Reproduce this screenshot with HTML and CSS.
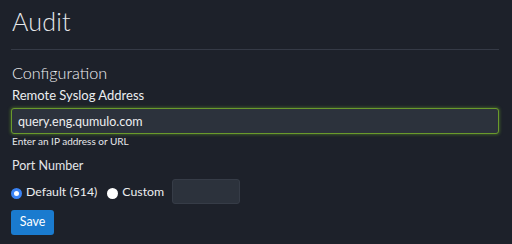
FILE: index.html
```html
<!DOCTYPE html>
<html>
<head>
<meta charset="utf-8">
<link rel="stylesheet" href="styles.css">
</head>
<body>
<div class="page">
  <h1 class="title">Audit</h1>
  <hr class="rule">
  <h2 class="section">Configuration</h2>
  <label class="label">Remote Syslog Address</label>
  <input class="field field-focus" type="text" value="query.eng.qumulo.com">
  <div class="help">Enter an IP address or URL</div>
  <div class="port-label">Port Number</div>
  <div class="radio-row">
    <label class="radio"><span class="dot dot-on"></span>Default (514)</label>
    <label class="radio"><span class="dot"></span>Custom</label>
    <input class="field small" type="text">
  </div>
  <button class="btn">Save</button>
</div>
</body>
</html>
```
FILE: styles.css
```css
html, body { margin: 0; padding: 0; background: #1d212a; }
body { font-family: "Lato", "Noto Sans", sans-serif; color: #e3e5e8; }
.page { padding: 0 13px 0 11px; display: flex; flex-direction: column; align-items: flex-start; }
.title { font-size: 25px; font-weight: 300; margin: 6px 0 0 1px; line-height: 30px; letter-spacing: 0.2px; color: #e6e8ea; }
.rule { align-self: stretch; border: 0; border-top: 1px solid #353a46; margin: 13px 0 0 0; height: 0; }
.section { font-size: 16.2px; font-weight: 300; margin: 13px 0 0 1px; line-height: 19px; color: #eef0f2; }
.label { font-size: 13px; font-weight: 400; margin: 5px 0 0 1px; line-height: 16px; display: block; color: #eceef0; }
.field { box-sizing: border-box; background: #2c323c; border: 1px solid #363c47; border-radius: 3px; color: #eceef0; font-family: inherit; font-size: 12.5px; outline: none; }
.field-focus { align-self: stretch; height: 26px; margin-top: 5px; padding: 0 6px; border-color: #6a9a2c; box-shadow: 0 0 3px 1px rgba(110, 170, 40, 0.4); }
.help { font-size: 10px; margin: 1px 0 0 1px; line-height: 12px; color: #e6e8ea; }
.port-label { font-size: 12.5px; line-height: 15px; margin: 11px 0 0 1px; color: #e3e5e8; }
.radio-row { display: flex; align-items: center; margin-top: 6px; height: 25px; }
.radio { display: flex; align-items: center; font-size: 12.3px; line-height: 15px; color: #eceef0; }
.radio + .radio { margin-left: 10px; }
.dot { width: 11px; height: 11px; border-radius: 50%; background: #ffffff; margin: 3px 4px 0 0; box-sizing: border-box; }
.dot-on { background: #ffffff; border: 3.5px solid #3a83f4; }
.small { width: 68px; height: 25px; margin-left: 8px; }
.btn { margin-top: 6px; width: 43px; height: 25px; background: #1a7bcf; color: #ffffff; border: 0; border-radius: 3px; font-family: inherit; font-size: 12.4px; padding: 0 0 2px 0; }
```
